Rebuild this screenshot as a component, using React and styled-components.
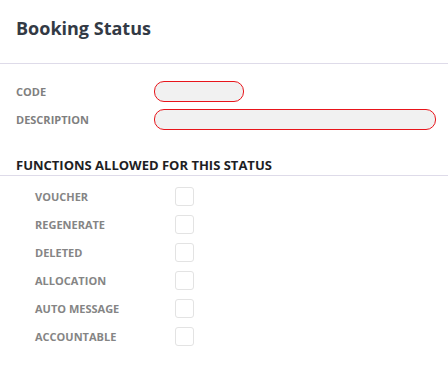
import React from "react";
import styled, { createGlobalStyle } from "styled-components";

const Global = createGlobalStyle`
  html, body { margin: 0; padding: 0; background: #fff; }
  body { font-family: "Open Sans", "Noto Sans", sans-serif; }
  * { box-sizing: border-box; }
`;

const Page = styled.div`
  width: 448px;
  height: 370px;
  background: #fff;
  overflow: hidden;
`;

const Header = styled.div`
  height: 64px;
  padding: 16px 16px 0;
  border-bottom: 1px solid #dedbe9;
`;

const Title = styled.h1`
  margin: 0;
  font-size: 18px;
  line-height: 24px;
  font-weight: 700;
  color: #333a45;
`;

const Form = styled.div`
  padding: 17px 12px 0 16px;
  display: flex;
  flex-direction: column;
  gap: 7px;
`;

const FieldRow = styled.div`
  display: flex;
  align-items: center;
  height: 21px;
`;

const Label = styled.label`
  width: 138px;
  font-size: 11px;
  font-weight: 700;
  color: #7f7f7f;
`;

const Input = styled.div`
  height: 21px;
  width: ${(p) => p.$w};
  border: 1px solid #e8151b;
  border-radius: 10px;
  background: #f1f1f1;
`;

const SectionTitle = styled.div`
  margin-top: 26px;
  padding: 0 16px 1px;
  font-size: 13px;
  font-weight: 700;
  line-height: 18px;
  color: #1e1e24;
  border-bottom: 1px solid #dedbe9;
`;

const List = styled.div`
  padding: 11px 0 0 35px;
  display: flex;
  flex-direction: column;
  gap: 10px;
`;

const CheckRow = styled.div`
  display: flex;
  align-items: center;
  height: 18px;
`;

const CheckLabel = styled.span`
  width: 140px;
  font-size: 11px;
  font-weight: 700;
  color: #858585;
`;

const Box = styled.span`
  width: 19px;
  height: 19px;
  border: 1px solid #e3e3e3;
  border-radius: 3px;
  background: #fff;
`;

const items = ["VOUCHER", "REGENERATE", "DELETED", "ALLOCATION", "AUTO MESSAGE", "ACCOUNTABLE"];

export default function App() {
  return (
    <Page>
      <Global />
      <Header>
        <Title>Booking Status</Title>
      </Header>
      <Form>
        <FieldRow>
          <Label>CODE</Label>
          <Input $w="90px" />
        </FieldRow>
        <FieldRow>
          <Label>DESCRIPTION</Label>
          <Input $w="282px" />
        </FieldRow>
      </Form>
      <SectionTitle>FUNCTIONS ALLOWED FOR THIS STATUS</SectionTitle>
      <List>
        {items.map((t) => (
          <CheckRow key={t}>
            <CheckLabel>{t}</CheckLabel>
            <Box />
          </CheckRow>
        ))}
      </List>
    </Page>
  );
}
